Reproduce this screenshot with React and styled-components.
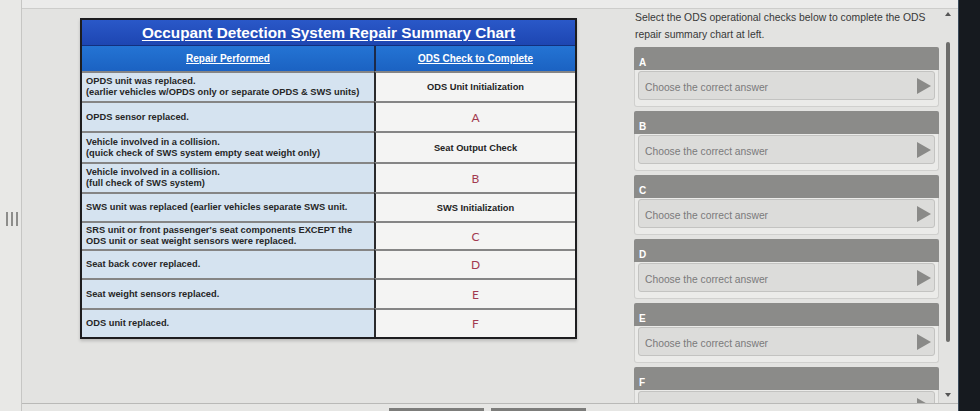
import React from 'react';
import styled, { createGlobalStyle } from 'styled-components';

const GlobalStyle = createGlobalStyle`
  html, body {
    margin: 0;
    padding: 0;
    background: #e3e3e1;
    overflow: hidden;
  }
  body {
    font-family: "Liberation Sans", Arial, sans-serif;
  }
`;

const rows = [
  { repair: ['OPDS unit was replaced.', '(earlier vehicles w/OPDS only or separate OPDS & SWS units)'], check: 'ODS Unit Initialization', h: 30 },
  { repair: ['OPDS sensor replaced.'], letter: 'A', h: 30 },
  { repair: ['Vehicle involved in a collision.', '(quick check of SWS system empty seat weight only)'], check: 'Seat Output Check', h: 31 },
  { repair: ['Vehicle involved in a collision.', '(full check of SWS system)'], letter: 'B', h: 30 },
  { repair: ['SWS unit was replaced (earlier vehicles separate SWS unit.'], check: 'SWS Initialization', h: 29 },
  { repair: ["SRS unit or front passenger's seat components EXCEPT the", 'ODS unit or seat weight sensors were replaced.'], letter: 'C', h: 28 },
  { repair: ['Seat back cover replaced.'], letter: 'D', h: 29 },
  { repair: ['Seat weight sensors replaced.'], letter: 'E', h: 30 },
  { repair: ['ODS unit replaced.'], letter: 'F', h: 29 },
];

const answers = ['A', 'B', 'C', 'D', 'E', 'F'];

const App = () => {
  return (
    <>
      <GlobalStyle />
      <Screen>
        <Rail>
          <Grip>
            <span />
            <span />
            <span />
          </Grip>
        </Rail>

        <Workspace>
          <Band />
          <Body>
            <Content>
              <Chart>
                <ChartTitle>Occupant Detection System Repair Summary Chart</ChartTitle>
                <HeadCell>Repair Performed</HeadCell>
                <HeadCell $last>ODS Check to Complete</HeadCell>
                {rows.map((r, i) => (
                  <React.Fragment key={i}>
                    <RepairCell $h={r.h}>
                      {r.repair.map((line) => (
                        <div key={line}>{line}</div>
                      ))}
                    </RepairCell>
                    <CheckCell $h={r.h}>
                      {r.letter ? <Letter>{r.letter}</Letter> : r.check}
                    </CheckCell>
                  </React.Fragment>
                ))}
              </Chart>

              <Panel>
                <Prompt>
                  Select the ODS operational checks below to complete the ODS
                  <br />
                  repair summary chart at left.
                </Prompt>
                {answers.map((a) => (
                  <Question key={a}>
                    <QuestionHead>{a}</QuestionHead>
                    <AnswerBox>
                      <Select>
                        <span>Choose the correct answer</span>
                        <Arrow />
                      </Select>
                    </AnswerBox>
                  </Question>
                ))}
              </Panel>
            </Content>

            <ScrollCol>
              <ScrollArrow />
              <Thumb />
              <ScrollArrow $down />
            </ScrollCol>
          </Body>
          <Footer>
            <FootButton />
            <FootButton />
          </Footer>
        </Workspace>

        <Bezel />
      </Screen>
    </>
  );
};

const Screen = styled.div`
  display: flex;
  width: 980px;
  height: 411px;
  overflow: hidden;
  background: #e3e3e1;
`;

const Rail = styled.div`
  width: 22px;
  flex-shrink: 0;
  background: #e8e8e6;
  border-right: 1px solid #c6c6c4;
  display: flex;
  justify-content: center;
  padding-top: 212px;
  box-sizing: border-box;
`;

const Grip = styled.div`
  display: flex;
  gap: 3px;
  height: 14px;
  margin-left: 2px;

  span {
    width: 2px;
    background: #8d8d8b;
  }
`;

const Workspace = styled.div`
  flex: 1;
  display: flex;
  flex-direction: column;
  min-width: 0;
`;

const Band = styled.div`
  height: 8px;
  flex-shrink: 0;
  background: #ebebea;
  border-bottom: 1px solid #cdcdcb;
`;

const Body = styled.div`
  flex: 1;
  display: flex;
  min-height: 0;
  overflow: hidden;
`;

const Content = styled.div`
  flex: 1;
  display: flex;
  align-items: flex-start;
  padding-left: 58px;
  overflow: hidden;
`;

const Chart = styled.div`
  margin-top: 9px;
  width: 497px;
  flex-shrink: 0;
  display: grid;
  grid-template-columns: 292px 1fr;
  border: 2px solid #1d1d1f;
  box-sizing: border-box;
  box-shadow: 0 2px 3px rgba(0, 0, 0, 0.18);
`;

const ChartTitle = styled.div`
  grid-column: 1 / 3;
  height: 25px;
  display: flex;
  align-items: center;
  justify-content: center;
  background: linear-gradient(#2a58c8, #1d46b2);
  border-bottom: 1px solid #13307e;
  color: #fff;
  font-size: 15.3px;
  font-weight: 700;
  text-decoration: underline;
  text-underline-offset: 2px;
`;

const HeadCell = styled.div`
  height: 25px;
  display: flex;
  align-items: center;
  justify-content: center;
  background: linear-gradient(#2474d4, #1b62c2);
  border-left: ${(p) => (p.$last ? '2px solid #1d2a48' : 'none')};
  color: #fff;
  font-size: 10px;
  font-weight: 700;
  text-decoration: underline;
`;

const RepairCell = styled.div`
  height: ${(p) => p.$h}px;
  box-sizing: border-box;
  display: flex;
  flex-direction: column;
  justify-content: center;
  padding-left: 4px;
  background: #d5e3f0;
  border-top: 2px solid #858585;
  color: #262626;
  font-size: 9.3px;
  font-weight: 700;
  line-height: 11px;
  white-space: nowrap;
`;

const CheckCell = styled.div`
  height: ${(p) => p.$h}px;
  box-sizing: border-box;
  display: flex;
  align-items: center;
  justify-content: center;
  background: #f4f4f3;
  border-top: 2px solid #858585;
  border-left: 2px solid #2a2a2c;
  color: #232323;
  font-size: 9.3px;
  font-weight: 700;
`;

const Letter = styled.span`
  font-family: Lato, "Open Sans", sans-serif;
  font-weight: 400;
  font-size: 12px;
  color: #a2394f;
`;

const Panel = styled.div`
  margin-left: 57px;
  width: 305px;
  flex-shrink: 0;
  display: flex;
  flex-direction: column;
  gap: 4px;
`;

const Prompt = styled.p`
  margin: 0 0 0 1px;
  font-size: 10.4px;
  line-height: 17px;
  color: #383838;
  white-space: nowrap;
`;

const Question = styled.div`
  display: flex;
  flex-direction: column;
`;

const QuestionHead = styled.div`
  height: 23px;
  box-sizing: border-box;
  padding: 10px 0 0 5px;
  background: #8b8b89;
  border-radius: 2px 2px 0 0;
  color: #fff;
  font-size: 10px;
  font-weight: 700;
  line-height: 12px;
`;

const AnswerBox = styled.div`
  padding: 1px 3px 6px 3px;
  background: #ebebe9;
  border: 1px solid #d0d0ce;
  border-top: none;
  border-radius: 0 0 3px 3px;
`;

const Select = styled.div`
  height: 29px;
  box-sizing: border-box;
  display: flex;
  align-items: center;
  justify-content: space-between;
  padding: 3px 3px 0 6px;
  background: #dcdcda;
  border: 1px solid #c3c3c1;
  border-radius: 3px;
  color: #7a7a7a;
  font-size: 10.3px;
`;

const Arrow = styled.span`
  width: 0;
  height: 0;
  margin-top: -3px;
  border-top: 8px solid transparent;
  border-bottom: 8px solid transparent;
  border-left: 14px solid #8a8a88;
`;

const ScrollCol = styled.div`
  width: 18px;
  flex-shrink: 0;
  display: flex;
  flex-direction: column;
  align-items: center;
  padding: 3px 2px 0 0;
  box-sizing: border-box;
`;

const ScrollArrow = styled.span`
  width: 0;
  height: 0;
  border-left: 3px solid transparent;
  border-right: 3px solid transparent;
  ${(p) =>
    p.$down
      ? 'border-top: 4px solid #555; margin-top: 51px;'
      : 'border-bottom: 4px solid #555;'}
`;

const Thumb = styled.div`
  width: 4px;
  height: 300px;
  margin-top: 26px;
  border-radius: 2px;
  background: #6d6d6b;
`;

const Footer = styled.div`
  height: 7px;
  flex-shrink: 0;
  display: flex;
  align-items: flex-end;
  gap: 7px;
  padding-left: 367px;
  border-top: 1px solid #b9b9b7;
  background: #e6e6e4;
`;

const FootButton = styled.div`
  width: 95px;
  height: 3px;
  background: #7d7d7b;
`;

const Bezel = styled.div`
  width: 22px;
  flex-shrink: 0;
  background: #161a1f;
  border-left: 1px solid #3a4a5a;
  box-sizing: border-box;
`;

export default App;
